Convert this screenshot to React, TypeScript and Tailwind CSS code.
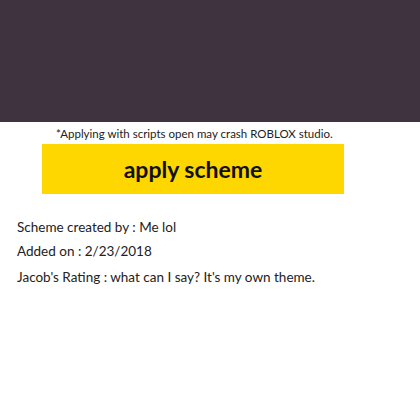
export default function App() {
  return (
    <div className="w-[420px] h-[420px] bg-white font-['Lato','Liberation_Sans',sans-serif]">
      <div className="h-[122px] bg-[#3f3340]" />
      <p className="pt-[5px] pl-[56px] text-[11.5px] leading-[14px] text-[#222]">
        *Applying with scripts open may crash ROBLOX studio.
      </p>
      <div className="ml-[42px] mt-[3px] flex h-[50px] w-[302px] items-center justify-center bg-[#ffd700]">
        <span className="text-[23px] font-bold leading-[28px] text-[#111]">apply scheme</span>
      </div>
      <div className="mt-[24px] flex flex-col gap-[6px] pl-[17px] text-[13.5px] leading-[18px] text-[#222]">
        <p>Scheme created by : Me lol</p>
        <p>Added on : 2/23/2018</p>
        <p className="mt-[2px]">Jacob's Rating : what can I say? It's my own theme.</p>
      </div>
    </div>
  )
}
